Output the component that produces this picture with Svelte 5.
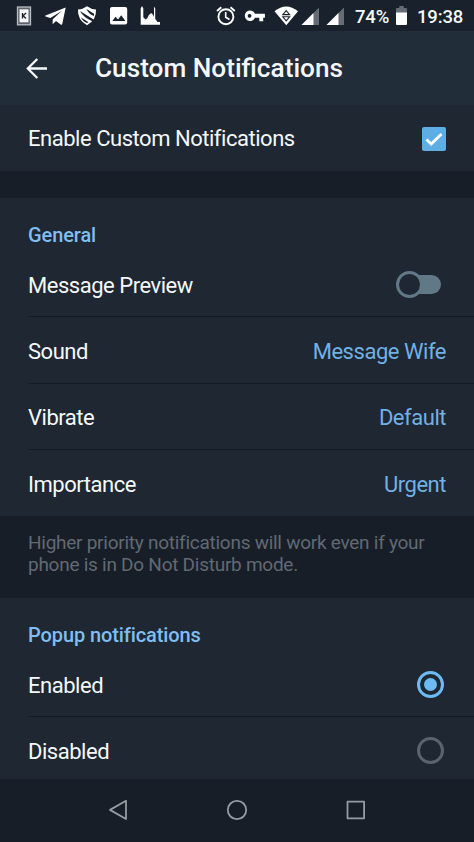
<script lang="ts">
  interface Setting {
    label: string;
    value?: string;
  }

  const settings: Setting[] = [
    { label: 'Message Preview' },
    { label: 'Sound', value: 'Message Wife' },
    { label: 'Vibrate', value: 'Default' },
    { label: 'Importance', value: 'Urgent' },
  ];
  const popupOptions = ['Enabled', 'Disabled'];

  let custom = $state(true);
  let preview = $state(false);
  let popup = $state('Enabled');
</script>

<div class="screen">
  <div class="status">
    <svg class="tray" viewBox="0 0 170 31" width="170" height="31" aria-hidden="true">
      <!-- boxed K -->
      <rect x="17.5" y="7" width="13" height="17.8" fill="#5c636b" stroke="#b9bec4" stroke-width="1.3" />
      <rect x="19.5" y="9.3" width="9" height="13" fill="#f4f5f6" />
      <path d="M22.5 13v5.500M26 13l-2.900 2.700L26 18.500" fill="none" stroke="#19222c" stroke-width="1.3" />
      <!-- paper plane -->
      <path d="M65.7 7.6L45.6 15.4q-1.3.6 0 1.1l4.8 1.5 11.2-7-8.8 8.3-.3 4.5q.7 0 1.2-.6l2.3-2.2 4.7 3.5q1.3.7 1.6-.8z" fill="#fff" />
      <!-- striped shield -->
      <path d="M87 6.3q4 3 9 3.2.7 10.2-9 15.8-9.7-5.6-9-15.8 5-.2 9-3.2z" fill="#fff" />
      <path d="M80 11l14 8.8-1.3 1.8Q83 17 80 11zM81 17.500l7.500 4.700-1.500.8q-4.500-2-6-5.500zM86.500 9l7.500 4.700v2.300q-6-2.500-7.500-7z" fill="#19222c" />
      <!-- picture -->
      <rect x="110" y="7" width="17.2" height="17.4" rx="2" fill="#fff" />
      <path d="M112.300 21l3.300-4.300 2.400 2.700 3.200-4.200 4.200 5.800z" fill="#19222c" />
      <!-- mosque -->
      <path d="M140.700 8.500l1.300-2.500 1.300 2.500v8.800l2.200 2.300 1.800-1.400q.3-3 3.900-5.200 2.500 2 2.800 4V8.500l.6-2 .6 2v10.200l2.300 3.400h2.500v2.600H140.700z" fill="#fff" />
    </svg>
    <svg class="signals" viewBox="205 0 145 31" width="145" height="31" aria-hidden="true">
      <!-- alarm -->
      <g fill="none" stroke="#fff">
        <circle cx="225.9" cy="16.7" r="7.5" stroke-width="1.9" />
        <path d="M225.700 12v5.200l3.800 2.300" stroke-width="1.6" />
        <path d="M217 10.900l4.300-3.600M230.500 7.300l4.300 3.600" stroke-width="1.9" />
      </g>
      <!-- key -->
      <path d="M255 13.800h9.900v4h-1.700v3.500h-3.900v-3.500H255a5.300 5.300 0 1 1 0-4zM250 14a1.900 1.900 0 1 0 0 3.700 1.900 1.900 0 0 0 0-3.700z" fill="#fff" fill-rule="evenodd" />
      <!-- wifi -->
      <path d="M274.500 11.300q11.700-9.500 23.500 0L286.300 25.200z" fill="#fff" />
      <path d="M286.200 10.600l3.400 4h-6.800zM286.200 20.800l3.400-4h-6.800z" fill="none" stroke="#19222c" stroke-width="1.1" />
      <!-- two mobile signals -->
      {#each [301.5, 326.5] as x}
        <g transform="translate({x} 7.5)">
          <path d="M0 17.500L17.500 0v17.500z" fill="#656c74" />
          <path d="M0 17.500L12 5.500v12z" fill="#fff" />
        </g>
      {/each}
    </svg>
    <span class="percent">74%</span>
    <svg class="battery" viewBox="0 0 11 20" width="11" height="20" aria-hidden="true">
      <path d="M3.300 0h4.400v2H10q1 0 1 1v4H0V3q0-1 1-1h2.300z" fill="#656c74" />
      <path d="M0 6.500h11V18q0 1-1 1H1q-1 0-1-1z" fill="#fff" />
    </svg>
    <span class="clock">19:38</span>
  </div>

  <header>
    <button class="back" aria-label="Back">
      <svg viewBox="0 0 22 22" width="22" height="22" fill="none" stroke="currentColor" stroke-width="2.3">
        <path d="M21 11.500H2M11.300 2L1.800 11.500l9.500 9.500" />
      </svg>
    </button>
    <h1>Custom Notifications</h1>
  </header>

  <main>
    <button class="row enable" role="checkbox" aria-checked={custom} onclick={() => (custom = !custom)}>
      <span>Enable Custom Notifications</span>
      <span class="check" class:on={custom}>
        {#if custom}
          <svg viewBox="0 0 24 24" width="24" height="24" fill="none" stroke="#fff" stroke-width="2.7">
            <path d="M4.500 12.500l4.700 4.500L19.500 7" />
          </svg>
        {/if}
      </span>
    </button>

    <section>
      <h2>General</h2>
      {#each settings as item}
        {#if item.value}
          <button class="row">
            <span>{item.label}</span>
            <span class="value">{item.value}</span>
          </button>
        {:else}
          <button class="row" role="switch" aria-checked={preview} onclick={() => (preview = !preview)}>
            <span>{item.label}</span>
            <span class="switch" class:on={preview}><span class="thumb"></span></span>
          </button>
        {/if}
      {/each}
    </section>

    <p class="note">Higher priority notifications will work even if your phone is in Do Not Disturb mode.</p>

    <section class="popup">
      <h2>Popup notifications</h2>
      {#each popupOptions as option}
        <button class="row" role="radio" aria-checked={popup === option} onclick={() => (popup = option)}>
          <span>{option}</span>
          <span class="radio" class:on={popup === option}></span>
        </button>
      {/each}
    </section>
  </main>

  <nav>
    <svg viewBox="0 0 24 24" width="24" height="24"><path d="M20 2.700v18.300L4 11.900z" /></svg>
    <svg viewBox="0 0 24 24" width="24" height="24"><circle cx="12" cy="12" r="9.2" /></svg>
    <svg viewBox="0 0 24 24" width="24" height="24"><rect x="3.5" y="3.7" width="16.6" height="16.6" /></svg>
  </nav>
</div>

<style>
  :global(body) {
    margin: 0;
    background: #171e27;
  }
  .screen {
    width: 474px;
    height: 842px;
    display: flex;
    flex-direction: column;
    overflow: hidden;
    background: #171e27;
    color: #f5f8fa;
    font-family: Roboto, sans-serif;
  }
  button {
    margin: 0;
    padding: 0;
    border: 0;
    background: none;
    color: inherit;
    font: inherit;
    letter-spacing: inherit;
    text-align: left;
  }
  svg {
    display: block;
  }
  .status {
    flex: none;
    display: flex;
    align-items: center;
    height: 31px;
    background: #19222c;
    font-size: 18.5px;
    font-weight: 500;
    letter-spacing: -0.15px;
    white-space: nowrap;
  }
  .signals {
    margin-left: 35px;
  }
  .percent {
    width: 36px;
    margin-left: 5px;
    padding-top: 2px;
  }
  .battery {
    margin-left: 5px;
  }
  .clock {
    margin-left: 10px;
    padding-top: 2px;
  }
  header {
    flex: none;
    display: flex;
    align-items: center;
    height: 74px;
    padding-left: 26px;
    background: #222d3a;
  }
  .back {
    width: 69px;
  }
  h1 {
    margin: 0;
    font-size: 26.2px;
    font-weight: 500;
    white-space: nowrap;
  }
  main {
    flex: 1;
    min-height: 0;
    overflow: hidden;
  }
  section {
    box-sizing: border-box;
    height: 318px;
    background: #1e2732;
  }
  .popup {
    height: 200px;
  }
  h2 {
    box-sizing: border-box;
    height: 53px;
    margin: 0;
    padding: 25px 28px 0;
    color: #7ebef2;
    font-size: 20px;
    font-weight: 500;
    line-height: 25px;
    letter-spacing: -0.1px;
  }
  .row {
    box-sizing: border-box;
    display: flex;
    align-items: center;
    justify-content: space-between;
    width: 446px;
    height: 66.3px;
    margin-left: 28px;
    padding: 3px 28px 0 0;
    border-bottom: 1px solid #151c25;
    font-size: 22px;
    letter-spacing: -0.47px;
    white-space: nowrap;
  }
  .row:last-child {
    border-bottom-color: transparent;
  }
  .enable {
    width: 474px;
    height: 66px;
    margin: 0 0 27px;
    padding: 1px 28px 0;
    border: 0;
    background: #1e2732;
  }
  .value {
    color: #71b1e5;
  }
  .check {
    width: 24px;
    height: 24px;
    border-radius: 2px;
    box-shadow: inset 0 0 0 2px #68737e;
  }
  .check.on {
    background: #5eaee3;
    box-shadow: none;
  }
  .switch {
    position: relative;
    width: 38px;
    height: 19px;
    margin: 0 5px 2px 0;
    border-radius: 10px;
    background: #617887;
  }
  .thumb {
    position: absolute;
    top: -4px;
    left: -7px;
    box-sizing: border-box;
    width: 27px;
    height: 27px;
    border: 3px solid #617887;
    border-radius: 50%;
    background: #1e2732;
  }
  .switch.on .thumb {
    left: 18px;
  }
  .radio {
    display: grid;
    place-items: center;
    box-sizing: border-box;
    width: 27px;
    height: 27px;
    margin: 0 2px 2px 0;
    border: 3px solid #5b646e;
    border-radius: 50%;
  }
  .radio.on {
    border-color: #6cbbf5;
  }
  .radio.on::after {
    content: '';
    width: 13px;
    height: 13px;
    border-radius: 50%;
    background: #6cbbf5;
  }
  .note {
    box-sizing: border-box;
    height: 82px;
    margin: 0;
    padding: 16px 28px 0;
    color: #626973;
    font-size: 19px;
    line-height: 22px;
    letter-spacing: -0.26px;
  }
  nav {
    flex: none;
    display: flex;
    justify-content: center;
    gap: 95px;
    box-sizing: border-box;
    height: 63px;
    padding-top: 19px;
    background: #171e27;
    fill: none;
    stroke: #969ba3;
    stroke-width: 1.8;
    stroke-linejoin: round;
  }
</style>
